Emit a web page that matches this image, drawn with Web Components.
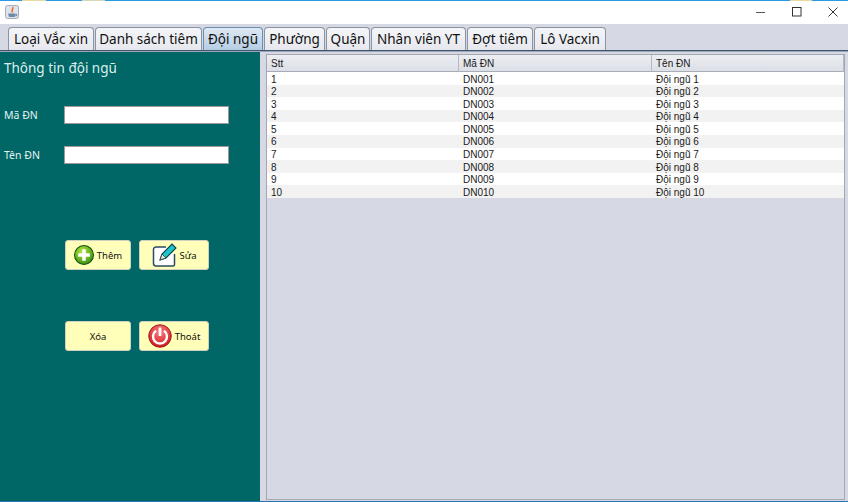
<!DOCTYPE html>
<html>
<head>
<meta charset="utf-8">
<title>Đội ngũ</title>
<style>
    html, body { margin: 0; padding: 0; height: 100%; overflow: hidden; }
    body { font-family: "Noto Sans", "Liberation Sans", sans-serif; }
</style>
</head>
<body>
<app-window>
    <tab-bar>
        <tab-item w="86">Loại Vắc xin</tab-item>
        <tab-item w="107">Danh sách tiêm</tab-item>
        <tab-item w="60" active>Đội ngũ</tab-item>
        <tab-item w="61">Phường</tab-item>
        <tab-item w="44">Quận</tab-item>
        <tab-item w="95">Nhân viên YT</tab-item>
        <tab-item w="66">Đợt tiêm</tab-item>
        <tab-item w="72">Lô Vacxin</tab-item>
    </tab-bar>
    <team-form slot="left"></team-form>
    <data-table slot="right"></data-table>
</app-window>

<script>
// Window frame: title bar, tab strip and the two panes
class AppWindow extends HTMLElement {
    constructor() {
        super();
        this.attachShadow({ mode: 'open' });
        this.shadowRoot.innerHTML = /*html*/`
            <style>
                :host { display: flex; flex-direction: column; width: 848px; height: 502px; background: #d6d9e3; }
                .accent { height: 1px; flex: none; background: linear-gradient(90deg, #2a9be0 0 22px, #e8d9a0 22px 46px, #2a9be0 46px 82px, #d8d8b8 82px 105px, #2a9be0 105px 790px, #e8d9a0 790px 812px, #2a9be0 812px); }
                .title { height: 23px; flex: none; background: #fff; display: flex; align-items: center; padding-left: 5px; }
                .title svg.logo { width: 14px; height: 14px; margin-top: -2px; }
                .controls { margin-left: auto; display: flex; margin-top: -2px; }
                .controls svg { width: 10px; height: 10px; display: block; margin-right: 26px; }
                .controls svg:last-child { margin-right: 10px; }
                .rule { height: 2px; flex: none; background: linear-gradient(#41566d 0 1px, #9aa7b8 1px); }
                .panes { flex: 1; display: flex; min-height: 0; }
                .left { width: 260px; flex: none; display: flex; }
                .right { flex: 1; display: flex; min-width: 0; padding: 2px 3px 1px 6px; }
                .bottom { height: 1px; flex: none; background: #2a72b0; }
            </style>
            <div class="accent"></div>
            <div class="title">
                <svg class="logo" viewBox="0 0 14 14">
                    <rect x=".5" y=".5" width="13" height="13" rx="2" fill="#dfe4ec" stroke="#a4adbb"/>
                    <path d="M3 8.5h7.5l-1 3.5H4z" fill="#6f88a8"/>
                    <path d="M7.5 2c1.8 1.8-2 3 0 5.5" fill="none" stroke="#e8772a" stroke-width="1.7"/>
                    <path d="M10.5 9.3h1.2v1.5h-1.7" fill="none" stroke="#5f7fa8"/>
                </svg>
                <div class="controls">
                    <svg viewBox="0 0 10 10"><path d="M0 5.5h9" stroke="#555" stroke-width="1"/></svg>
                    <svg viewBox="0 0 10 10"><rect x=".5" y=".5" width="8.5" height="8.5" fill="none" stroke="#333"/></svg>
                    <svg viewBox="0 0 10 10"><path d="M.5 .5l9 9M9.5 .5l-9 9" stroke="#333" stroke-width="1"/></svg>
                </div>
            </div>
            <slot></slot>
            <div class="rule"></div>
            <div class="panes">
                <div class="left"><slot name="left"></slot></div>
                <div class="right"><slot name="right"></slot></div>
            </div>
            <div class="bottom"></div>
        `;
    }
}

class TabBar extends HTMLElement {
    constructor() {
        super();
        this.attachShadow({ mode: 'open' });
        this.shadowRoot.innerHTML = /*html*/`
            <style>
                :host { display: flex; flex: none; height: 26px; box-sizing: border-box; padding: 3px 0 0 8px; gap: 1px; background: #d6d9e3; }
            </style>
            <slot></slot>
        `;
    }
}

class TabItem extends HTMLElement {
    constructor() {
        super();
        this.attachShadow({ mode: 'open' });
        this.shadowRoot.innerHTML = /*html*/`
            <style>
                :host {
                    display: flex; align-items: center; justify-content: center; box-sizing: border-box;
                    height: 23px; padding-bottom: 1px; border: 1px solid #8a94a2; border-bottom: none; border-radius: 4px 4px 0 0;
                    background: linear-gradient(#f4f5f8, #e6e8ee); color: #111;
                    font: 13.5px "Noto Sans", "Liberation Sans", sans-serif; white-space: nowrap;
                }
                :host([active]) { background: linear-gradient(#dfe8f2, #b4cde4); border-color: #6d8fae; }
            </style>
            <slot></slot>
        `;
    }
    connectedCallback() {
        this.style.width = this.getAttribute('w') + 'px';
    }
}

class FormField extends HTMLElement {
    constructor() {
        super();
        this.attachShadow({ mode: 'open' });
        this.shadowRoot.innerHTML = /*html*/`
            <style>
                :host { display: flex; align-items: center; height: 18px; color: #e6f2f0; font-size: 10.5px; }
                label { width: 60px; padding-left: 4px; }
                input { box-sizing: border-box; width: 165px; height: 18px; margin: 0; padding: 0 2px; border: 1px solid #9a9a9a; background: #fff; outline: none; }
            </style>
            <label></label><input type="text">
        `;
    }
    connectedCallback() {
        this.shadowRoot.querySelector('label').textContent = this.getAttribute('label');
    }
}

class ActionButton extends HTMLElement {
    constructor() {
        super();
        this.attachShadow({ mode: 'open' });
        this.shadowRoot.innerHTML = /*html*/`
            <style>
                :host {
                    display: flex; align-items: center; justify-content: center; box-sizing: border-box;
                    height: 30px; gap: 3px; background: #ffffb9; border: 1px solid #cfd0c0; border-radius: 3px;
                    color: #111; font: 9.5px "Noto Sans", "Liberation Sans", sans-serif;
                }
                ::slotted(svg) { display: block; flex: none; }
            </style>
            <slot name="icon"></slot><slot></slot>
        `;
    }
}

// Left pane: title, two inputs, two rows of buttons
class TeamForm extends HTMLElement {
    constructor() {
        super();
        this.attachShadow({ mode: 'open' });
        this.shadowRoot.innerHTML = /*html*/`
            <style>
                :host { display: flex; flex-direction: column; flex: 1; box-sizing: border-box; background: #006666; padding-top: 6px; }
                h1 { margin: 0 0 0 4px; height: 20px; line-height: 20px; color: #dcefec; font-size: 13.5px; font-weight: 400; }
                .fields { display: flex; flex-direction: column; gap: 22px; margin-top: 28px; }
                .buttons { display: grid; grid-template-columns: 66px 70px; column-gap: 8px; row-gap: 51px; margin: 76px 0 0 65px; }
            </style>
            <h1>Thông tin đội ngũ</h1>
            <div class="fields">
                <form-field label="Mã ĐN"></form-field>
                <form-field label="Tên ĐN"></form-field>
            </div>
            <div class="buttons">
                <action-button>
                    <svg slot="icon" width="20" height="20" viewBox="0 0 19 19">
                        <defs><radialGradient id="g" cx=".4" cy=".3" r=".8"><stop offset="0" stop-color="#b4e23c"/><stop offset="1" stop-color="#2d8a10"/></radialGradient></defs>
                        <circle cx="9.5" cy="9.5" r="9" fill="url(#g)" stroke="#14500e"/>
                        <path d="M9.5 4v11M4 9.5h11" stroke="#fff" stroke-width="3.4"/>
                    </svg>
                    Thêm
                </action-button>
                <action-button>
                    <svg slot="icon" width="25" height="26" viewBox="0 0 25 26">
                        <path d="M14 5H4a2.5 2.5 0 0 0-2.5 2.5v14A2.5 2.5 0 0 0 4 24h17a1.500 1.500 0 0 0 1.5-1.5V12" fill="#fff" stroke="#2f4a66" stroke-width="1.5"/>
                        <path d="M8 18l2-6L20 2l4 4-10 10z" fill="#1fc4c4" stroke="#123c50" stroke-width="1.1"/>
                        <path d="M8 18l2-6 4 4z" fill="#f3e3c4" stroke="#123c50" stroke-width=".8"/>
                    </svg>
                    Sửa
                </action-button>
                <action-button>Xóa</action-button>
                <action-button>
                    <svg slot="icon" width="24" height="24" viewBox="0 0 24 24">
                        <defs><radialGradient id="r" cx=".5" cy=".3" r=".8"><stop offset="0" stop-color="#ff7b7b"/><stop offset="1" stop-color="#c40d14"/></radialGradient></defs>
                        <circle cx="12" cy="12" r="11.3" fill="url(#r)" stroke="#8e0c10" stroke-width=".8"/>
                        <path d="M8 6.8a7 7 0 1 0 8 0" fill="none" stroke="#fff" stroke-width="2.4"/>
                        <path d="M12 3.5v8.5" stroke="#fff" stroke-width="2.8"/>
                    </svg>
                    Thoát
                </action-button>
            </div>
        `;
    }
}

// Right pane: table with header and striped rows, empty area below
class DataTable extends HTMLElement {
    constructor() {
        super();
        this.attachShadow({ mode: 'open' });
        let rows = '';
        for (let i = 1; i <= 10; i++) {
            const code = 'DN' + String(i).padStart(3, '0');
            rows += `<div class="row"><span>${i}</span><span>${code}</span><span>Đội ngũ ${i}</span></div>`;
        }
        this.shadowRoot.innerHTML = /*html*/`
            <style>
                :host { display: flex; flex-direction: column; flex: 1; box-sizing: border-box; background: #d6d9e3; border: 1px solid #a4a8b2; color: #1a1a1a; font: 10px "Liberation Sans", sans-serif; }
                .head, .row { display: grid; grid-template-columns: 192px 193px 1fr; }
                .head { height: 17px; background: linear-gradient(#eceef2, #dcdfe6); border-bottom: 1px solid #a8acb6; box-sizing: border-box; }
                .head span { padding-left: 4px; line-height: 18px; border-right: 1px solid #b4b8c2; }
                .row { box-sizing: border-box; height: 12.6px; padding-top: 1.5px; line-height: 11px; background: #fff; }
                .row:nth-child(even) { background: #f2f2f2; }
                .row span { padding-left: 4px; }
            </style>
            <div class="head"><span>Stt</span><span>Mã ĐN</span><span>Tên ĐN</span></div>
            <div class="body">${rows}</div>
        `;
    }
}

customElements.define('app-window', AppWindow);
customElements.define('tab-bar', TabBar);
customElements.define('tab-item', TabItem);
customElements.define('form-field', FormField);
customElements.define('action-button', ActionButton);
customElements.define('team-form', TeamForm);
customElements.define('data-table', DataTable);
</script>
</body>
</html>
